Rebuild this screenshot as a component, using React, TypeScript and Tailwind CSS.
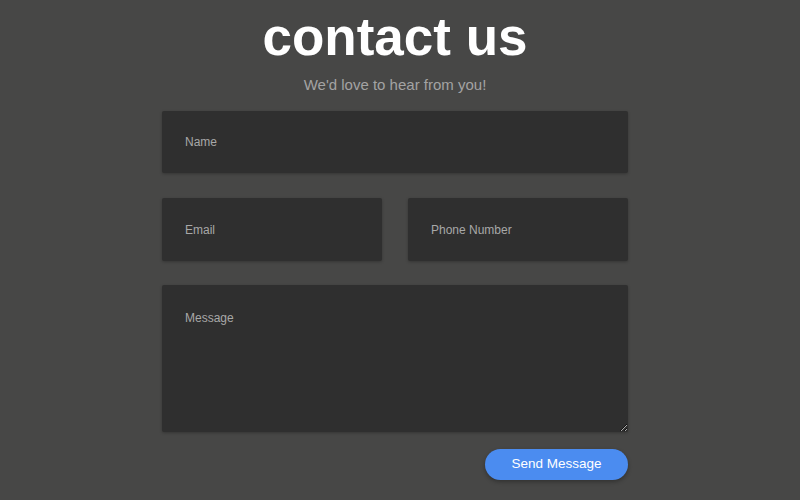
export default function App() {
  const field =
    "w-full bg-[#2f2f2f] text-[12px] text-[#bbb] placeholder:text-[#a8a8a8] px-[23px] rounded-[2px] shadow-[0_1px_3px_rgba(0,0,0,0.25)] outline-none";
  return (
    <div
      className="min-h-[500px] w-full bg-[#474746] flex justify-center pr-[10px]"
      style={{ fontFamily: '"Liberation Sans", Arial, sans-serif' }}
    >
      <div className="w-[466px] flex flex-col items-stretch">
        <h1 className="text-center text-white font-bold text-[53px] leading-[53px] mt-[10px]">
          contact us
        </h1>
        <p className="text-center text-[#a3a3a3] text-[15px] leading-[20px] mt-[12px]">
          We'd love to hear from you!
        </p>
        <input className={`${field} h-[62px] mt-[16px]`} placeholder="Name" />
        <div className="flex justify-between mt-[25px]">
          <input className={`${field} !w-[220px] h-[63px]`} placeholder="Email" />
          <input className={`${field} !w-[220px] h-[63px]`} placeholder="Phone Number" />
        </div>
        <textarea
          className={`${field} h-[147px] mt-[24px] pt-[24px]`}
          placeholder="Message"
        />
        <div className="flex justify-end mt-[17px]">
          <button className="w-[143px] h-[31px] rounded-full bg-[#4b8cf0] text-white text-[13.5px] shadow-[0_2px_4px_rgba(0,0,0,0.3)]">
            Send Message
          </button>
        </div>
      </div>
    </div>
  );
}
